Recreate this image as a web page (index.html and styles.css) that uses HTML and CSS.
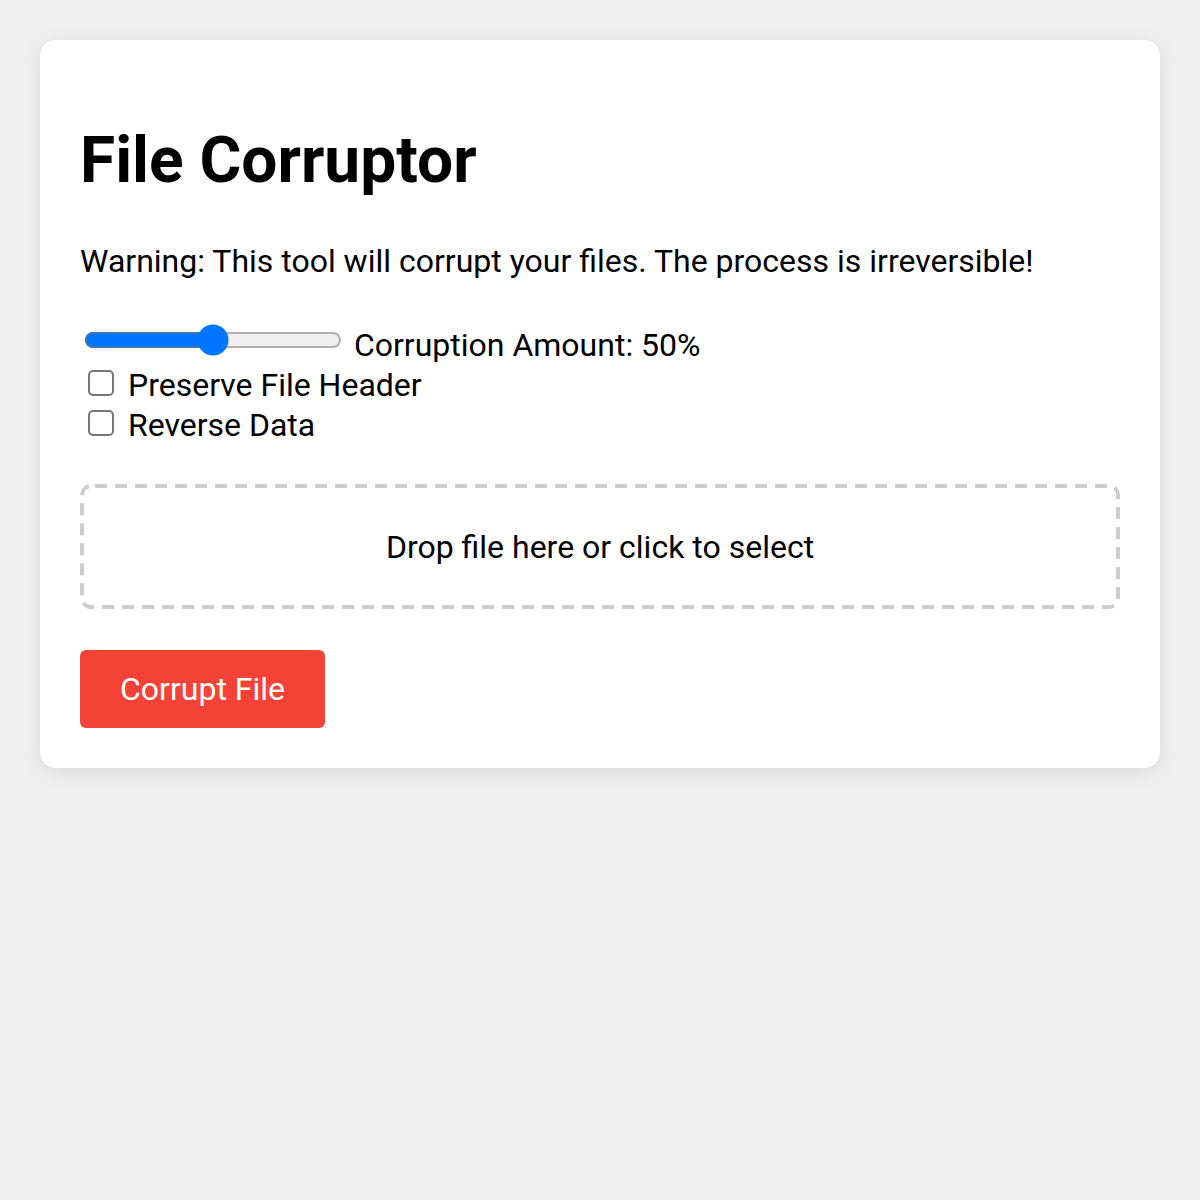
FILE: index.html
```
<!DOCTYPE html>
<html lang="en">
<head>
<meta charset="utf-8">
<title>File Corruptor</title>
<link rel="stylesheet" href="styles.css">
</head>
<body>
<div class="card">
  <h1>File Corruptor</h1>
  <p class="warning">Warning: This tool will corrupt your files. The process is irreversible!</p>
  <div class="options">
    <div class="row">
      <input type="range" id="amount" min="0" max="100" value="50">
      <label for="amount">Corruption Amount: 50%</label>
    </div>
    <div class="row">
      <input type="checkbox" id="header">
      <label for="header">Preserve File Header</label>
    </div>
    <div class="row">
      <input type="checkbox" id="reverse">
      <label for="reverse">Reverse Data</label>
    </div>
  </div>
  <div class="drop-zone">Drop file here or click to select</div>
  <button class="corrupt-btn">Corrupt File</button>
</div>
</body>
</html>
```
FILE: styles.css
```
html, body {
  margin: 0;
  padding: 0;
}
body {
  background: #f0f0f0;
  font-family: Roboto, "Liberation Sans", Arial, sans-serif;
  font-size: 32px;
  color: #000;
  padding: 40px;
}
.card {
  background: #fff;
  border-radius: 16px;
  box-shadow: 0 4px 20px rgba(0, 0, 0, 0.1);
  padding: 40px;
}
.card h1 {
  font-size: 64px;
  font-weight: 700;
  margin: 43px 0;
}
.warning {
  margin: 44px 0 40px;
}
.options {
  margin-bottom: 40px;
}
.row input {
  zoom: 2;
  vertical-align: baseline;
}
.drop-zone {
  border: 4px solid transparent;
  border-radius: 10px;
  background-image: url("data:image/svg+xml,%3Csvg xmlns='http://www.w3.org/2000/svg' width='100%25' height='100%25'%3E%3Crect x='2' y='2' width='1036' height='121' rx='9' ry='9' fill='none' stroke='%23cccccc' stroke-width='4' stroke-dasharray='12 8' stroke-dashoffset='-4'/%3E%3C/svg%3E");
  background-origin: border-box;
  background-clip: border-box;
  background-repeat: no-repeat;
  padding: 40px;
  text-align: center;
  margin-bottom: 40px;
}
.corrupt-btn {
  background: #f44336;
  color: #fff;
  border: none;
  border-radius: 6px;
  padding: 20px 40px;
  font-family: inherit;
  font-size: 32px;
  cursor: pointer;
  display: block;
}
```
